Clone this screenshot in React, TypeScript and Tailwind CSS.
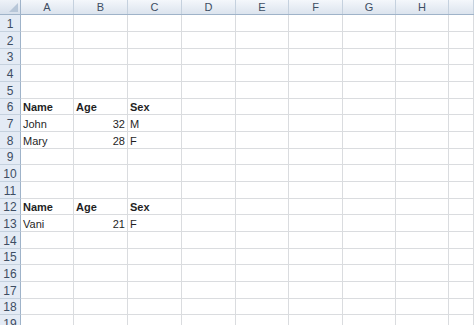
const columns = ['A', 'B', 'C', 'D', 'E', 'F', 'G', 'H', '']

const colWidths: Record<string, string> = {
  A: 'w-[53px]',
  B: 'w-[54px]',
  C: 'w-[54px]',
  D: 'w-[54px]',
  E: 'w-[53px]',
  F: 'w-[54px]',
  G: 'w-[53px]',
  H: 'w-[53px]',
  '': 'flex-1',
}

type Cell = { text: string; bold?: boolean; right?: boolean }

const data: Record<number, Record<string, Cell>> = {
  6: { A: { text: 'Name', bold: true }, B: { text: 'Age', bold: true }, C: { text: 'Sex', bold: true } },
  7: { A: { text: 'John' }, B: { text: '32', right: true }, C: { text: 'M' } },
  8: { A: { text: 'Mary' }, B: { text: '28', right: true }, C: { text: 'F' } },
  12: { A: { text: 'Name', bold: true }, B: { text: 'Age', bold: true }, C: { text: 'Sex', bold: true } },
  13: { A: { text: 'Vani' }, B: { text: '21', right: true }, C: { text: 'F' } },
}

// rows alternate 17/17/16 px so they average the sheet's 16.7px
const rowHeights = ['h-[17px]', 'h-[17px]', 'h-[16px]']

const rows = Array.from({ length: 19 }, (_, i) => i + 1)

export default function App() {
  return (
    <div className="w-[474px] h-[335px] bg-white overflow-hidden font-['Liberation_Sans',Arial,sans-serif] text-[11px] text-[#1f1f1f]">
      <div className="h-[325px] overflow-hidden">
        {/* Column header */}
        <div className="flex h-[15px] bg-gradient-to-b from-[#f4f7fb] to-[#dce4ee] border-b border-[#9fb3c9]">
          <div className="w-[21px] shrink-0 relative border-r border-[#9fb3c9] bg-gradient-to-b from-[#eef2f8] to-[#d6dfeb]">
            <div className="absolute right-[2px] bottom-[2px] w-0 h-0 border-l-[9px] border-l-transparent border-b-[9px] border-b-[#b7c6d8]" />
          </div>
          {columns.map((c, i) => (
            <div
              key={i}
              className={`${colWidths[c]} shrink-0 flex items-center justify-center border-r border-[#c5d1de] text-[#3d4d63] text-[11px]`}
            >
              {c}
            </div>
          ))}
        </div>

        {/* Rows */}
        {rows.map((r, idx) => (
          <div key={r} className={`flex ${rowHeights[idx % 3]} shrink-0`}>
            <div className="w-[21px] shrink-0 flex items-end justify-center pb-[1px] bg-[#e4ebf5] border-r border-b border-r-[#9fb3c9] border-b-[#c5d1de] text-[#3d4d63] text-[12px] leading-none">
              {r}
            </div>
            {columns.map((c, i) => {
              const cell = data[r]?.[c]
              return (
                <div
                  key={i}
                  className={`${colWidths[c]} shrink-0 flex items-end pb-[1px] px-[2px] border-r border-b border-[#dadcdf] leading-none whitespace-nowrap ${
                    cell?.right ? 'justify-end' : 'justify-start'
                  } ${cell?.bold ? 'font-bold' : ''}`}
                >
                  {cell?.text}
                </div>
              )
            })}
          </div>
        ))}
      </div>
    </div>
  )
}
